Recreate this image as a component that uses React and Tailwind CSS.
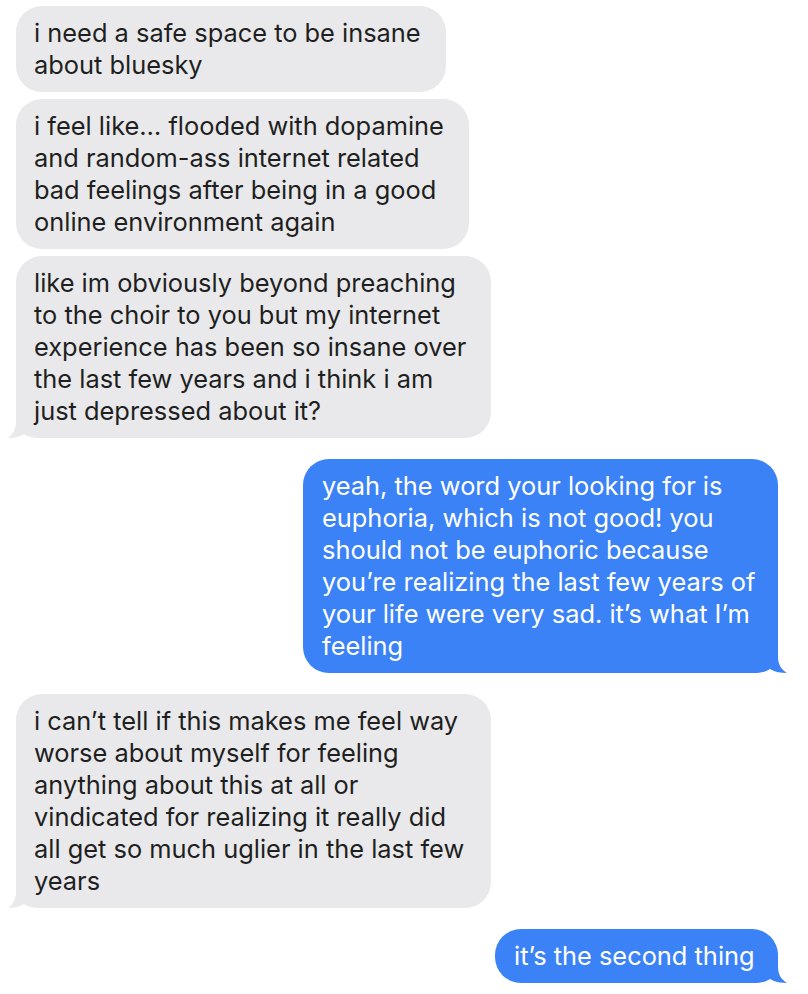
import React from "react";

function GrayTail() {
  return (
    <svg
      className="absolute left-[-8px] bottom-0"
      width="40"
      height="30"
      viewBox="0 0 40 30"
    >
      <path
        d="M8 0 L8 14 C8 22 4 27 0 30 C5 30 11 29 16 26 C20 29 26 30 32 30 L40 30 L40 0 Z"
        fill="#e9e9eb"
      />
    </svg>
  );
}

function BlueTail() {
  return (
    <svg
      className="absolute right-[-9px] bottom-0"
      width="41"
      height="30"
      viewBox="0 0 41 30"
    >
      <path
        d="M32 0 L32 14 C32 22 36 27 41 30 C35 30 29 29 24 26 C20 29 14 30 8 30 L0 30 L0 0 Z"
        fill="#3b82f6"
      />
    </svg>
  );
}

function Gray({ lines, w, tail, className = "" }) {
  return (
    <div
      className={
        "relative self-start rounded-[26px] bg-[#e9e9eb] px-[18px] py-[11px] text-[#1f1f1f] " +
        w +
        " " +
        className
      }
    >
      {tail && <GrayTail />}
      <div className="relative whitespace-nowrap">
        {lines.map((l, i) => (
          <div key={i}>{l}</div>
        ))}
      </div>
    </div>
  );
}

function Blue({ lines, w, className = "" }) {
  return (
    <div
      className={
        "relative self-end rounded-[26px] bg-[#3b82f6] px-[19px] py-[11px] text-white " +
        w +
        " " +
        className
      }
    >
      <BlueTail />
      <div className="relative whitespace-nowrap">
        {lines.map((l, i) => (
          <div key={i}>{l}</div>
        ))}
      </div>
    </div>
  );
}

export default function App() {
  return (
    <div
      className="w-[808px] h-[994px] overflow-hidden bg-white flex flex-col pl-4 pr-[30px] pt-[6px] text-[25.4px] leading-[32px]"
      style={{ fontFamily: "Inter, 'Noto Sans', sans-serif" }}
    >
      <Gray
        w="w-[430px]"
        lines={["i need a safe space to be insane", "about bluesky"]}
      />
      <Gray
        w="w-[453px]"
        className="mt-[7px]"
        lines={[
          "i feel like… flooded with dopamine",
          "and random-ass internet related",
          "bad feelings after being in a good",
          "online environment again",
        ]}
      />
      <Gray
        w="w-[475px]"
        className="mt-[7px]"
        tail
        lines={[
          "like im obviously beyond preaching",
          "to the choir to you but my internet",
          "experience has been so insane over",
          "the last few years and i think i am",
          "just depressed about it?",
        ]}
      />
      <Blue
        w="w-[475px]"
        className="mt-[21px]"
        lines={[
          "yeah, the word your looking for is",
          "euphoria, which is not good! you",
          "should not be euphoric because",
          "you’re realizing the last few years of",
          "your life were very sad. it’s what I’m",
          "feeling",
        ]}
      />
      <Gray
        w="w-[475px]"
        className="mt-[21px]"
        tail
        lines={[
          "i can’t tell if this makes me feel way",
          "worse about myself for feeling",
          "anything about this at all or",
          "vindicated for realizing it really did",
          "all get so much uglier in the last few",
          "years",
        ]}
      />
      <Blue
        w="w-[283px]"
        className="mt-[21px]"
        lines={["it’s the second thing"]}
      />
    </div>
  );
}
